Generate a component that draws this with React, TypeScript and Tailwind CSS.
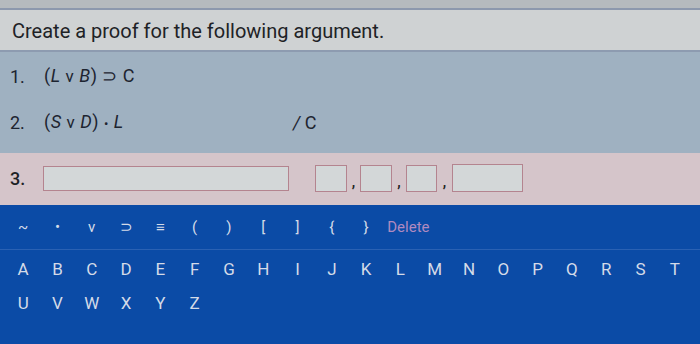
const row1 = ['A','B','C','D','E','F','G','H','I','J','K','L','M','N','O','P','Q','R','S','T']
const row2 = ['U','V','W','X','Y','Z']
const symbols = ['~', '•', 'v', '⊃', '≡', '(', ')', '[', ']', '{', '}']

function Key({ ch, small }: { ch: string; small?: boolean }) {
  return (
    <div className={`w-[34.3px] shrink-0 text-center ${small ? 'text-[15px]' : 'text-[17px]'}`}>{ch}</div>
  )
}

export default function App() {
  return (
    <div className="w-[700px] h-[344px] overflow-hidden flex flex-col bg-[#b8bdc1]" style={{ fontFamily: 'Roboto, "Liberation Sans", sans-serif' }}>
      <div className="h-[8px] bg-[#b5babe]" />
      <div className="h-[2px] bg-[#8c98ad]" />
      <div className="h-[40px] bg-[#cfd2d3] flex items-center pl-[12px] pt-[2px] text-[20px] text-[#1e2226]">
        Create a proof for the following argument.
      </div>
      <div className="h-[2px] bg-[#8d9bb0]" />
      <div className="h-[101px] bg-[#9fb1c1] flex flex-col text-[18px] text-[#1d2430]">
        <div className="flex items-center h-[46px] pt-[2px]">
          <span className="w-[44px] pl-[10px]">1.</span>
          <span className="tracking-[0.5px]">(<i>L</i> <span className="text-[17px]">v</span> <i>B</i>) ⊃ C</span>
        </div>
        <div className="flex items-center h-[50px] pb-[2px]">
          <span className="w-[44px] pl-[10px]">2.</span>
          <span className="w-[249px] tracking-[0.5px]">(<i>S</i> <span className="text-[17px]">v</span> <i>D</i>) <span className="text-[13px] align-middle">•</span> <i>L</i></span>
          <span><i>/</i> C</span>
        </div>
      </div>
      <div className="h-[52px] bg-[#d5c5ca] flex items-center gap-0 pb-[2px]">
        <span className="w-[43px] pl-[10px] text-[18px] font-medium text-[#1d2226]">3.</span>
        <div className="w-[246px] h-[25px] border border-[#b4848f] bg-[#d3d7d8]" />
        <div className="w-[26px]" />
        <div className="w-[32px] h-[27px] border border-[#b4848f] bg-[#d3d7d8]" />
        <span className="w-[13px] text-center text-[14px] font-bold text-[#222] self-end pb-[10px]">,</span>
        <div className="w-[32px] h-[27px] border border-[#b4848f] bg-[#d3d7d8]" />
        <span className="w-[14px] text-center text-[14px] font-bold text-[#222] self-end pb-[10px]">,</span>
        <div className="w-[31px] h-[27px] border border-[#b4848f] bg-[#d3d7d8]" />
        <span className="w-[15px] text-center text-[14px] font-bold text-[#222] self-end pb-[10px]">,</span>
        <div className="w-[71px] h-[28px] border border-[#b4848f] bg-[#d3d7d8]" />
      </div>
      <div className="flex-1 bg-[#0b4ba6] text-[#d4dbe8] flex flex-col">
        <div className="h-[45px] flex items-center pl-[6px] border-b border-[#2a61b3]">
          {symbols.map((s, i) => (
            <Key key={i} ch={s} small />
          ))}
          <span className="text-[15px] text-[#b08ac0] pl-[4px]">Delete</span>
        </div>
        <div className="h-[40px] flex items-center pl-[6px]">
          {row1.map(c => <Key key={c} ch={c} />)}
        </div>
        <div className="h-[30px] flex items-center pl-[6px] pb-[2px]">
          {row2.map(c => <Key key={c} ch={c} />)}
        </div>
      </div>
    </div>
  )
}
